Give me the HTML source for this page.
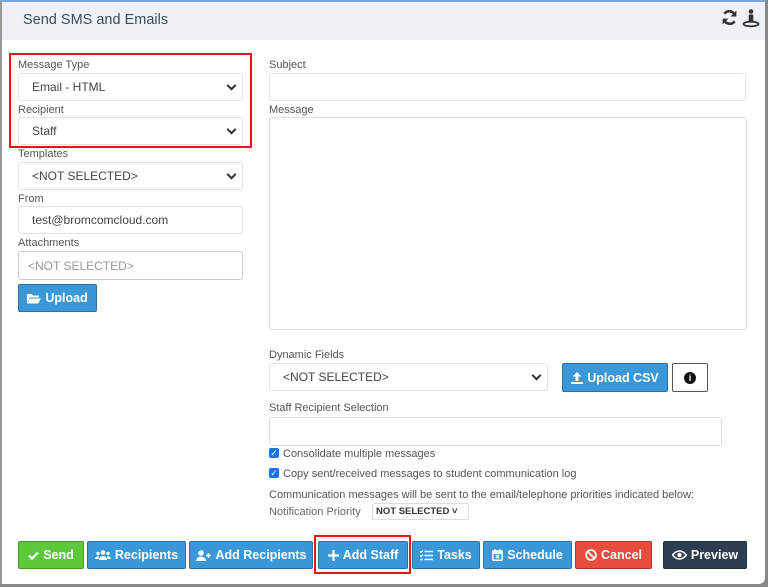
<!DOCTYPE html>
<html><head><meta charset="utf-8"><style>
*{box-sizing:border-box;margin:0;padding:0}
body{width:768px;height:587px;background:#888;font-family:"Liberation Sans",sans-serif;position:relative;overflow:hidden}
.m{position:absolute;left:0;top:0;width:765px;height:584px;background:#fff;border-top:2px solid #7aa7e0;border-left:2px solid #999;border-radius:0 0 6px 0}
.hd{position:absolute;left:0;top:0;right:0;height:38px;background:#eef2f7}
.t{position:absolute;left:21px;top:10px;font-size:14.5px;color:#3d4b5c}
.a{position:absolute}
.l{position:absolute;font-size:11px;color:#555;white-space:nowrap}
.in{position:absolute;border:1px solid #e2e2e2;border-radius:3px;background:#fff;font-size:12px;color:#444;padding-left:13px;display:flex;align-items:center}
.sel::after{content:"";position:absolute;right:7px;top:50%;width:5px;height:5px;border-right:2px solid #333;border-bottom:2px solid #333;transform:translateY(-70%) rotate(45deg)}
.b{position:absolute;top:541px;height:28px;border-radius:2px;color:#fff;font-size:12.5px;font-weight:bold;display:flex;align-items:center;justify-content:center;gap:4px;border:1px solid rgba(0,0,0,.25);background:#3a97d8;white-space:nowrap}
.b svg{flex:none}
.cb{position:absolute;width:10px;height:10px;background:#1a73e8;border-radius:2px;color:#fff;font-size:9px;line-height:10px;text-align:center}
.red{position:absolute;border:2px solid #e8141b}
</style></head><body>
<div class="m">
<div class="hd"><div class="t">Send SMS and Emails</div>
<svg class="a" style="left:719px;top:7px" width="17" height="17" viewBox="0 0 16 16"><path d="M13 6A5.5 5.5 0 0 0 3.2 4.5" fill="none" stroke="#333" stroke-width="2.4"/><path d="M3 10a5.5 5.5 0 0 0 9.8 1.5" fill="none" stroke="#333" stroke-width="2.4"/><path d="M14.5 1.5v5.5h-5.5z" fill="#333"/><path d="M1.5 14.5v-5.5h5.5z" fill="#333"/></svg>
<svg class="a" style="left:739px;top:6px" width="20" height="20" viewBox="0 0 20 20"><circle cx="10" cy="3.5" r="2.3" fill="#333"/><rect x="7.7" y="6.5" width="4.6" height="7" rx="1" fill="#333"/><ellipse cx="10" cy="16" rx="7.5" ry="2.3" fill="none" stroke="#333" stroke-width="1.8"/></svg>
</div>
</div>
<div class="red" style="left:9px;top:53px;width:243px;height:95px"></div>
<div class="l" style="left:18px;top:59px">Message Type</div>
<div class="in sel" style="left:18px;top:73px;width:225px;height:28px">Email - HTML</div>
<div class="l" style="left:18px;top:104px">Recipient</div>
<div class="in sel" style="left:18px;top:117px;width:225px;height:28px">Staff</div>
<div class="l" style="left:18px;top:148px">Templates</div>
<div class="in sel" style="left:18px;top:162px;width:225px;height:28px">&lt;NOT SELECTED&gt;</div>
<div class="l" style="left:18px;top:193px">From</div>
<div class="in" style="left:18px;top:206px;width:225px;height:28px">test@bromcomcloud.com</div>
<div class="l" style="left:18px;top:237px">Attachments</div>
<div class="in" style="left:18px;top:251px;width:225px;height:29px;color:#999;padding-left:9px;border-color:#ccc">&lt;NOT SELECTED&gt;</div>
<div class="b" style="left:18px;top:284px;width:79px;height:28px"><svg width="14" height="11" viewBox="0 0 14 11"><path d="M0 1h5l1 1.5h6v2H3L0 10z" fill="#fff"/><path d="M3 5.5h11L11 10.5H0z" fill="#fff"/></svg>Upload</div>
<div class="l" style="left:269px;top:59px">Subject</div>
<div class="in" style="left:269px;top:73px;width:477px;height:28px"></div>
<div class="l" style="left:269px;top:104px">Message</div>
<div class="in" style="left:269px;top:117px;width:478px;height:213px;border-color:#ddd"></div>
<div class="l" style="left:269px;top:349px">Dynamic Fields</div>
<div class="in sel" style="left:269px;top:363px;width:279px;height:28px">&lt;NOT SELECTED&gt;</div>
<div class="b" style="left:562px;top:363px;width:106px;height:29px"><svg width="12" height="12" viewBox="0 0 12 12"><path d="M6 0L1.5 4.5h3V9h3V4.5h3z" fill="#fff"/><rect x="0" y="10" width="12" height="2" fill="#fff"/></svg>Upload CSV</div>
<div class="a" style="left:672px;top:363px;width:36px;height:29px;border:1px solid #555;border-radius:2px;display:flex;align-items:center;justify-content:center"><div style="width:12px;height:12px;border-radius:50%;background:#111;color:#fff;font-size:9px;font-weight:bold;text-align:center;line-height:12px">i</div></div>
<div class="l" style="left:269px;top:402px">Staff Recipient Selection</div>
<div class="in" style="left:269px;top:417px;width:453px;height:29px;border-color:#ddd"></div>
<div class="cb" style="left:269px;top:448px">✓</div><div class="l" style="left:283px;top:448px">Consolidate multiple messages</div>
<div class="cb" style="left:269px;top:468px">✓</div><div class="l" style="left:283px;top:468px">Copy sent/received messages to student communication log</div>
<div class="l" style="left:269px;top:489px">Communication messages will be sent to the email/telephone priorities indicated below:</div>
<div class="l" style="left:269px;top:506px;color:#666">Notification Priority</div>
<div class="a" style="left:372px;top:503px;width:97px;height:17px;border:1px solid #ddd;border-radius:2px;font-size:9.5px;font-weight:bold;color:#333;padding:2px 3px;white-space:nowrap">NOT SELECTED ˅</div>
<div class="b" style="left:18px;width:66px;background:#5cc83a"><svg width="11" height="9" viewBox="0 0 11 9"><path d="M1 4.5l3 3 6-6" fill="none" stroke="#fff" stroke-width="2.2"/></svg>Send</div>
<div class="b" style="left:87px;width:99px"><svg width="16" height="10" viewBox="0 0 16 10"><circle cx="8" cy="2.5" r="2.3" fill="#fff"/><circle cx="3" cy="3.5" r="1.7" fill="#fff"/><circle cx="13" cy="3.5" r="1.7" fill="#fff"/><path d="M4 10a4 4 0 0 1 8 0z M0 9a3 3 0 0 1 4-2.5L3.5 9z M16 9a3 3 0 0 0-4-2.5l.5 2.5z" fill="#fff"/></svg>Recipients</div>
<div class="b" style="left:189px;width:124px"><svg width="16" height="11" viewBox="0 0 16 11"><circle cx="5" cy="3" r="2.8" fill="#fff"/><path d="M0 11a5 4.5 0 0 1 10 0z" fill="#fff"/><path d="M12.5 3v5M10 5.5h5" stroke="#fff" stroke-width="1.6"/></svg>Add Recipients</div>
<div class="red" style="left:314px;top:535px;width:97px;height:39px"></div>
<div class="b" style="left:318px;width:90px"><svg width="11" height="11" viewBox="0 0 11 11"><path d="M5.5 0v11M0 5.5h11" stroke="#fff" stroke-width="2.2"/></svg>Add Staff</div>
<div class="b" style="left:412px;width:68px"><svg width="13" height="11" viewBox="0 0 13 11"><path d="M0 1.5l1 1 2-2M0 5.5l1 1 2-2" fill="none" stroke="#fff" stroke-width="1.2"/><path d="M4.5 1.5H13M4.5 5.5H13M4.5 9.5H13M0.5 9.5h2" stroke="#fff" stroke-width="1.6"/></svg>Tasks</div>
<div class="b" style="left:483px;width:89px"><svg width="11" height="12" viewBox="0 0 11 12"><rect x=".8" y="2" width="9.4" height="9.2" rx="1" fill="none" stroke="#fff" stroke-width="1.5"/><path d="M.8 2h9.4v2.5H.8z M3 0v3M8 0v3" fill="#fff" stroke="#fff" stroke-width="1.3"/><path d="M3.8 6l3.4 3.4M7.2 6L3.8 9.4" stroke="#fff" stroke-width="1.2"/></svg>Schedule</div>
<div class="b" style="left:575px;width:77px;background:#e74c3c"><svg width="12" height="12" viewBox="0 0 12 12"><circle cx="6" cy="6" r="4.9" fill="none" stroke="#fff" stroke-width="1.8"/><path d="M2.6 2.6l6.8 6.8" stroke="#fff" stroke-width="1.8"/></svg>Cancel</div>
<div class="b" style="left:663px;width:84px;background:#2c3e50"><svg width="15" height="10" viewBox="0 0 15 10"><path d="M.5 5Q7.5-3 14.5 5Q7.5 13 .5 5z" fill="none" stroke="#fff" stroke-width="1.5"/><circle cx="7.5" cy="5" r="2.2" fill="#fff"/></svg>Preview</div>
</body></html>
